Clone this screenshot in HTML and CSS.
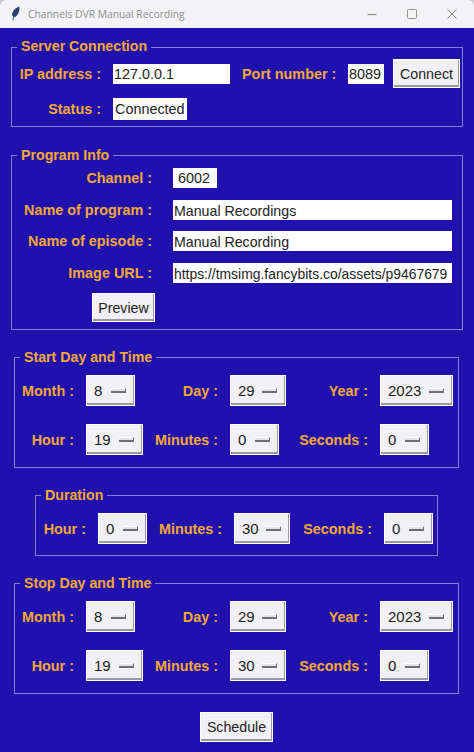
FILE: index.html
```html
<!DOCTYPE html>
<html lang="en">
<head>
<meta charset="utf-8">
<title>Channels DVR Manual Recording</title>
<link rel="stylesheet" href="styles.css">
</head>
<body>
<div class="window">
  <header class="titlebar">
    <svg class="feather" viewBox="0 0 9 15" width="9" height="15"><path d="M1.6 14.6 L2 10.5 C0.8 9.5 0.8 7.5 2 5.5 C3.5 3 5.8 1 8.4 0.4 C8.9 3.5 8 7 6 9.5 C5 10.6 3.8 11 2.8 11 L2.4 14.6 Z" fill="#26426e"/></svg>
    <span class="title">Channels DVR Manual Recording</span>
    <div class="controls">
      <svg viewBox="0 0 10 10" width="10" height="10"><path d="M0.5 5.5H9.5" stroke="#8f8f8f" stroke-width="1.2" fill="none"/></svg>
      <svg viewBox="0 0 10 10" width="10" height="10"><rect x="0.5" y="0.5" width="9" height="9" rx="1" stroke="#8f8f8f" fill="none"/></svg>
      <svg viewBox="0 0 10 10" width="10" height="10"><path d="M0.5 0.5L9.5 9.5M9.5 0.5L0.5 9.5" stroke="#8f8f8f" fill="none"/></svg>
    </div>
  </header>
  <main class="content">
    <fieldset class="group group-server">
      <legend>Server Connection</legend>
      <div class="server-grid">
        <label class="lbl">IP address :</label>
        <div class="field f-ip">127.0.0.1</div>
        <label class="lbl">Port number :</label>
        <div class="field f-port">8089</div>
        <button class="btn">Connect</button>
        <label class="lbl">Status :</label>
        <div class="field f-status">Connected</div>
      </div>
    </fieldset>
    <fieldset class="group group-program">
      <legend>Program Info</legend>
      <div class="program-grid">
        <label class="lbl">Channel :</label>
        <div class="field f-channel">6002</div>
        <label class="lbl">Name of program :</label>
        <div class="field f-name">Manual Recordings</div>
        <label class="lbl">Name of episode :</label>
        <div class="field f-name">Manual Recording</div>
        <label class="lbl">Image URL :</label>
        <div class="field">https://tmsimg.fancybits.co/assets/p9467679</div>
      </div>
      <button class="btn btn-preview">Preview</button>
    </fieldset>
    <fieldset class="group group-time">
      <legend>Start Day and Time</legend>
      <div class="time-grid">
        <label class="lbl">Month :</label>
        <div class="menu w-49"><span>8</span><i></i></div>
        <label class="lbl">Day :</label>
        <div class="menu w-56"><span>29</span><i></i></div>
        <label class="lbl">Year :</label>
        <div class="menu w-73"><span>2023</span><i></i></div>
        <label class="lbl">Hour :</label>
        <div class="menu w-57"><span>19</span><i></i></div>
        <label class="lbl">Minutes :</label>
        <div class="menu w-49"><span>0</span><i></i></div>
        <label class="lbl">Seconds :</label>
        <div class="menu w-49"><span>0</span><i></i></div>
      </div>
    </fieldset>
    <fieldset class="group group-duration">
      <legend>Duration</legend>
      <div class="duration-grid">
        <label class="lbl">Hour :</label>
        <div class="menu w-49"><span>0</span><i></i></div>
        <label class="lbl">Minutes :</label>
        <div class="menu w-56"><span>30</span><i></i></div>
        <label class="lbl">Seconds :</label>
        <div class="menu w-49"><span>0</span><i></i></div>
      </div>
    </fieldset>
    <fieldset class="group group-time">
      <legend>Stop Day and Time</legend>
      <div class="time-grid">
        <label class="lbl">Month :</label>
        <div class="menu w-49"><span>8</span><i></i></div>
        <label class="lbl">Day :</label>
        <div class="menu w-56"><span>29</span><i></i></div>
        <label class="lbl">Year :</label>
        <div class="menu w-73"><span>2023</span><i></i></div>
        <label class="lbl">Hour :</label>
        <div class="menu w-57"><span>19</span><i></i></div>
        <label class="lbl">Minutes :</label>
        <div class="menu w-56"><span>30</span><i></i></div>
        <label class="lbl">Seconds :</label>
        <div class="menu w-49"><span>0</span><i></i></div>
      </div>
    </fieldset>
    <div class="actions"><button class="btn btn-schedule">Schedule</button></div>
  </main>
</div>
</body>
</html>
```
FILE: styles.css
```css
* { box-sizing: border-box; }
html, body { margin: 0; padding: 0; height: 100%; }
body { background: #c9c9cf; font-family: "Liberation Sans", Arial, sans-serif; overflow: hidden; }
.window { width: 474px; height: 752px; display: flex; flex-direction: column; }
.titlebar {
  height: 28px; flex: none; background: #f3f3f5; border-radius: 6px 6px 0 0;
  display: flex; align-items: center; padding-left: 11px;
}
.feather { margin-right: 8px; margin-top: -1px; }
.title { font-family: "Open Sans", sans-serif; font-size: 10.3px; color: #8d8f92; }
.controls { margin-left: auto; display: flex; gap: 30px; padding-right: 17px; align-items: center; }
.content { flex: 1; background: #2011ae; padding-top: 10px; display: flex; flex-direction: column; align-items: flex-start; }
.group { border: 1px solid #7f7fd8; margin: 0; min-width: 0; padding: 0; }
.group legend { font-size: 14.2px; font-weight: 700; color: #f5a732; line-height: 18px; padding: 0 4px; margin-left: 5px; }
.group-server legend { position: relative; top: -1px; }
.lbl { font-size: 14.4px; font-weight: 700; color: #f5a732; text-align: right; white-space: nowrap; }
.field { background: #fff; color: #222; font-size: 14.4px; height: 20px; line-height: 21px; padding-left: 1px; white-space: nowrap; overflow: hidden; }

.btn {
  font-family: inherit; font-size: 14.2px; color: #222; background: #f1f0f4; padding: 0; height: 29px;
  border: 1px solid #fff; box-shadow: inset -1px -2px 0 #9a9a9a;
}

.group-server { width: 452px; height: 89px; margin-left: 11px; }
.server-grid {
  display: grid; grid-template-columns: 89px 117px 94px 36px 64px; column-gap: 12px; grid-template-rows: 29px 22px; row-gap: 10px;
  align-items: center; padding-top: 3px;
}
.server-grid .btn { margin-left: -3px; }
.f-ip { width: 117px; }
.field.f-status { width: 74px; height: 22px; line-height: 22px; padding-left: 2px; grid-column: 2 / 6; }

.group-program { width: 452px; height: 184px; margin: 19px 0 0 11px; }
.program-grid {
  display: grid; grid-template-columns: 140px 279px; column-gap: 21px; grid-auto-rows: 20px; row-gap: 11.5px; align-items: center; padding-top: 4px;
}
.program-grid .field { font-size: 13.9px; line-height: 22px; padding-left: 1px; }
.program-grid .f-name { font-size: 14.2px; }
.program-grid .f-channel { width: 44px; padding-left: 5px; font-size: 14.4px; line-height: 21px; }
.btn-preview { display: block; width: 63px; margin: 10.5px 0 0 80px; }

.group-time { width: 445px; height: 120px; margin: 18px 0 0 14px; }
.time-grid {
  display: grid; grid-template-columns: 59px 57px 63px 57px 69px 73px; column-gap: 12px; grid-template-rows: 31px 31px; row-gap: 18px;
  align-items: center; padding-top: 9px;
}
.time-grid .lbl:first-child, .time-grid .lbl:nth-child(7) { margin-left: -1px; }
.group-duration { width: 403px; height: 70px; margin: 18px 0 0 35px; }
.duration-grid {
  display: grid; grid-template-columns: 50px 49px 63px 57px 69px 49px; column-gap: 12px; grid-template-rows: 31px;
  align-items: center; padding-top: 9px;
}
.menu {
  height: 31px; background: #f1f0f4; color: #222; font-size: 15px;
  border: 1px solid #fff; box-shadow: inset -1px -2px 0 #9a9a9a;
  display: flex; align-items: center; justify-content: space-between; padding: 0 8px 1px 7px;
}
.menu i { display: block; width: 15px; height: 5px; background: #e4e4e8; border-bottom: 2px solid #6e6e6e; border-right: 1px solid #6e6e6e; border-top: 1px solid #fff; }
.w-49 { width: 49px; }
.w-56 { width: 56px; }
.w-57 { width: 57px; }
.w-73 { width: 73px; }
.actions { margin: 18px 0 0 200px; }
.btn-schedule { width: 73px; height: 30px; display: block; }
```
